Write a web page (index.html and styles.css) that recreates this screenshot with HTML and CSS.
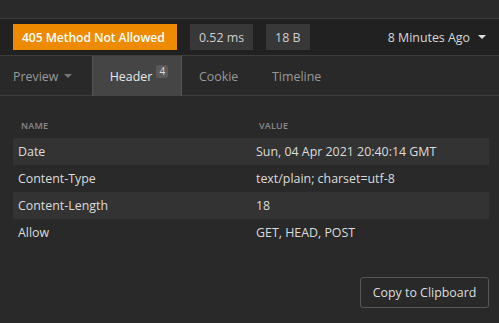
FILE: index.html
```html
<!DOCTYPE html>
<html>
<head>
<meta charset="utf-8">
<link rel="stylesheet" href="styles.css">
</head>
<body>
<div class="top-strip"></div>
<div class="status-bar">
  <span class="badge badge-status">405 Method Not Allowed</span>
  <span class="badge badge-meta">0.52 ms</span>
  <span class="badge badge-meta">18 B</span>
  <span class="history">8 Minutes Ago <span class="caret"></span></span>
</div>
<div class="tabs">
  <div class="tab tab-preview">Preview <span class="caret caret-dim"></span></div>
  <div class="tab tab-active">Header <span class="count">4</span></div>
  <div class="tab tab-cookie">Cookie</div>
  <div class="tab tab-timeline">Timeline</div>
</div>
<div class="content">
  <div class="table">
    <div class="row head"><div class="cell">NAME</div><div class="cell">VALUE</div></div>
    <div class="row shaded"><div class="cell">Date</div><div class="cell">Sun, 04 Apr 2021 20:40:14 GMT</div></div>
    <div class="row"><div class="cell">Content-Type</div><div class="cell">text/plain; charset=utf-8</div></div>
    <div class="row shaded"><div class="cell">Content-Length</div><div class="cell">18</div></div>
    <div class="row"><div class="cell">Allow</div><div class="cell">GET, HEAD, POST</div></div>
  </div>
  <div class="actions"><button class="copy-btn">Copy to Clipboard</button></div>
</div>
</body>
</html>
```
FILE: styles.css
```css
html, body {
  margin: 0;
  padding: 0;
  background: #292929;
  font-family: "Open Sans", "Noto Sans", sans-serif;
  font-size: 12.4px;
  color: #dcdcdc;
  width: 499px;
  height: 323px;
  overflow: hidden;
}
.top-strip {
  height: 18px;
  background: #2a2a2a;
  border-bottom: 1px solid #3d3d3d;
}
.status-bar {
  height: 36px;
  background: #212121;
  border-bottom: 1px solid #3d3d3d;
  display: flex;
  align-items: center;
  padding: 0 13px;
  gap: 13px;
}
.badge {
  height: 26px;
  display: flex;
  align-items: center;
  padding: 0 9px;
  box-sizing: border-box;
  white-space: nowrap;
}
.badge-status {
  background: #ee8a00;
  color: #fff;
  font-weight: 600;
  width: 164px;
  font-size: 12.2px;
  letter-spacing: -0.1px;
}
.badge-meta {
  background: #383838;
  color: #cfcfcf;
}
.history {
  margin-left: auto;
  color: #d8d8d8;
  display: flex;
  align-items: center;
  gap: 8px;
}
.caret {
  width: 0;
  height: 0;
  border-left: 4px solid transparent;
  border-right: 4px solid transparent;
  border-top: 4px solid #e0e0e0;
  display: inline-block;
}
.caret-dim {
  border-top-color: #777;
  margin-left: 6px;
}
.tabs {
  height: 39px;
  display: flex;
  background: #292929;
  border-bottom: 1px solid #3f3f3f;
}
.tab {
  display: flex;
  align-items: center;
  color: #999;
  box-sizing: border-box;
  height: 40px;
}
.tab-preview { width: 92px; padding-left: 13px; }
.tab-active {
  width: 90px;
  background: #454545;
  color: #e8e8e8;
  border-left: 1px solid #555;
  border-right: 1px solid #555;
  justify-content: center;
  padding-left: 4px;
}
.count {
  background: #5a5a5a;
  color: #ddd;
  font-size: 10px;
  width: 12px;
  text-align: center;
  border-radius: 2px;
  margin-left: 4px;
  margin-top: -9px;
  line-height: 13px;
}
.tab-cookie { padding-left: 17px; width: 90px; }
.tab-timeline { padding-left: 0; }
.content {
  padding: 16px 10px 0 13px;
}
.table {
  display: flex;
  flex-direction: column;
}
.row {
  display: grid;
  grid-template-columns: 1fr 1fr;
  height: 27px;
  align-items: center;
}
.row .cell { padding-left: 5px; }
.row.head {
  height: 26px;
  font-size: 9px;
  color: #8a8a8a;
  font-weight: 600;
  letter-spacing: 0.2px;
}
.row.head .cell { padding-left: 8px; }
.row.shaded { background: #333333; }
.actions {
  display: flex;
  justify-content: flex-end;
  margin-top: 31px;
}
.copy-btn {
  background: transparent;
  border: 1px solid #575757;
  border-radius: 3px;
  color: #dddddd;
  font-family: inherit;
  font-size: 12.4px;
  width: 129px;
  height: 31px;
  padding: 0;
}
```
